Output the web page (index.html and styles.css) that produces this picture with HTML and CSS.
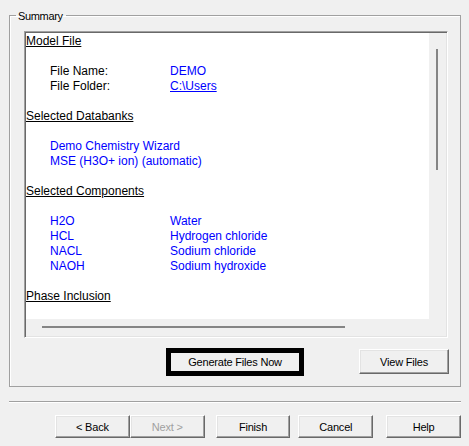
FILE: index.html
```html
<!DOCTYPE html>
<html>
<head>
<meta charset="utf-8">
<link rel="stylesheet" href="styles.css">
</head>
<body>
<div class="dialog">
  <fieldset class="group">
    <legend class="group-label">Summary</legend>
    <div class="listbox">
      <div class="content">
        <div class="heading">Model File</div>
        <div class="items">
          <div class="item"><span class="key">File Name:</span><span class="val">DEMO</span></div>
          <div class="item"><span class="key">File Folder:</span><span class="val link">C:\Users</span></div>
        </div>
        <div class="heading">Selected Databanks</div>
        <div class="items">
          <div class="item"><span class="val">Demo Chemistry Wizard</span></div>
          <div class="item"><span class="val">MSE (H3O+ ion) (automatic)</span></div>
        </div>
        <div class="heading">Selected Components</div>
        <div class="items">
          <div class="item"><span class="key val">H2O</span><span class="val">Water</span></div>
          <div class="item"><span class="key val">HCL</span><span class="val">Hydrogen chloride</span></div>
          <div class="item"><span class="key val">NACL</span><span class="val">Sodium chloride</span></div>
          <div class="item"><span class="key val">NAOH</span><span class="val">Sodium hydroxide</span></div>
        </div>
        <div class="heading">Phase Inclusion</div>
      </div>
      <div class="vscroll"><div class="vthumb"></div></div>
      <div class="hscroll"><div class="hthumb"></div></div>
      <div class="corner"></div>
    </div>
    <div class="actions">
      <button class="btn btn-default">Generate Files Now</button>
      <button class="btn btn-view">View Files</button>
    </div>
  </fieldset>
  <div class="separator"></div>
  <div class="nav">
    <button class="btn nav-btn back">&lt; Back</button>
    <button class="btn nav-btn next" disabled>Next &gt;</button>
    <button class="btn nav-btn finish">Finish</button>
    <button class="btn nav-btn cancel">Cancel</button>
    <button class="btn nav-btn help">Help</button>
  </div>
</div>
</body>
</html>
```

FILE: styles.css
```css
html, body {
  margin: 0;
  padding: 0;
}
body {
  width: 469px;
  height: 446px;
  background: #f0f0f0;
  font-family: "Liberation Sans", Arial, sans-serif;
  overflow: hidden;
}
.dialog {
  padding: 9px 8px 0 9px;
}
.group {
  box-sizing: border-box;
  width: 452px;
  margin: 0;
  padding: 10px 11px 10px 14px;
  border: 1px solid #a0a0a0;
  box-shadow: inset 1px 1px 0 #fff;
  min-width: 0;
}
.group-label {
  font-size: 11px;
  line-height: 12px;
  letter-spacing: -0.35px;
  color: #000;
  padding: 0 3px 0 2px;
  margin-left: -8px;
  position: relative;
  top: 1px;
}
.listbox {
  box-sizing: border-box;
  width: 424px;
  height: 307px;
  display: grid;
  grid-template-columns: 1fr 17px;
  grid-template-rows: 1fr 17px;
  border-style: solid;
  border-width: 1px;
  border-color: #a0a0a0 #fff #fff #a0a0a0;
  box-shadow: inset 1px 1px 0 #696969, inset -1px -1px 0 #e3e3e3;
  padding: 1px;
  background: #f0f0f0;
}
.content {
  background: #fff;
  padding-top: 1px;
  font-size: 12px;
  line-height: 15px;
  color: #000;
  overflow: hidden;
}
.heading {
  text-decoration: underline;
  white-space: nowrap;
}
.items {
  margin: 15px 0;
  padding-left: 24px;
}
.item {
  display: flex;
  white-space: nowrap;
}
.key {
  width: 120px;
  flex: none;
}
.val {
  color: #0000ff;
}
.link {
  text-decoration: underline;
}
.vscroll {
  background: #f0f0f0;
}
.vthumb {
  margin: 16px 0 0 7px;
  width: 2px;
  height: 121px;
  background: #858585;
}
.hscroll {
  background: #f0f0f0;
}
.hthumb {
  margin: 7px 0 0 16px;
  width: 303px;
  height: 2px;
  background: #858585;
}
.corner {
  background: #f0f0f0;
}
.actions {
  display: flex;
  align-items: flex-start;
  margin-top: 10px;
}
.btn {
  box-sizing: border-box;
  font-family: "Liberation Sans", Arial, sans-serif;
  font-size: 11px;
  letter-spacing: -0.2px;
  color: #000;
  background: #f0f0f0;
  border: 1px solid;
  border-color: #fff #696969 #696969 #fff;
  box-shadow: inset -1px -1px 0 #a0a0a0, inset 1px 1px 0 #e3e3e3;
  padding: 0;
  margin: 0;
  height: 23px;
}
.btn-default {
  width: 138px;
  height: 28px;
  margin-left: 142px;
  border: 5px solid #000;
  box-shadow: none;
  background: #f0f0f0;
}
.btn-view {
  width: 90px;
  height: 25px;
  margin-left: 55px;
  margin-top: 1px;
}
.separator {
  width: 452px;
  height: 1px;
  background: #a0a0a0;
  border-bottom: 1px solid #fff;
  margin-top: 14px;
}
.nav {
  display: flex;
  margin-top: 12px;
}
.nav-btn {
  width: 75px;
}
.back { margin-left: 46px; }
.next { margin-left: 0; color: #a0a0a0; }
.finish { margin-left: 11px; }
.cancel { margin-left: 8px; }
.help { margin-left: 13px; }
```
